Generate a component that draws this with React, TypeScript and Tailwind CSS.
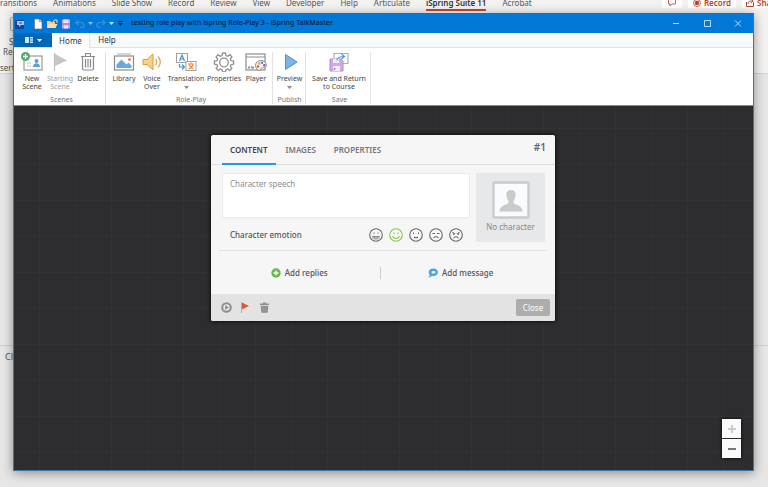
import { useState, type ReactNode } from 'react';
import clsx from 'clsx';

const hostTabs = ['Transitions', 'Animations', 'Slide Show', 'Record', 'Review', 'View', 'Developer', 'Help', 'Articulate', 'iSpring Suite 11', 'Acrobat'];

/* Title bar icons */

const AppIcon = () => (
  <svg className="h-3 w-3" viewBox="0 0 12 12">
    <rect x="1" y="2" width="9" height="9" fill="#1d3f94" />
    <path d="M3 3h7v4H7L5 9V7H3z" fill="#a9c9f0" />
    <path d="M5 5h3" stroke="#1d3f94" />
  </svg>
);

const NewFileIcon = () => (
  <svg className="h-3 w-3" viewBox="0 0 12 12">
    <path d="M2.5 1h5L10 3.5V11H2.500z" fill="#fafafa" stroke="#667" strokeWidth=".6" />
    <path d="M7.500 1v2.500H10" fill="#ccd" stroke="#667" strokeWidth=".6" />
  </svg>
);

const OpenIcon = () => (
  <svg className="h-3 w-3" viewBox="0 0 12 12">
    <path d="M1 10V3h3l1 1h4v2" fill="#f4cf85" />
    <path d="M7 4l1.500-2H11v3" fill="none" stroke="#d5e7fa" />
    <path d="M1 10l2-4h8.500L9.500 10z" fill="#ffe0a0" />
  </svg>
);

const SaveIcon = () => (
  <svg className="h-3 w-3" viewBox="0 0 12 12">
    <path d="M2 1.500h8v9H2z" fill="#c9a0e4" />
    <path d="M3.500 1.500h5V5h-5zM4 7.500h4v3H4z" fill="#efe0fa" />
    <path d="M2 6h8" stroke="#a873cf" />
  </svg>
);

const UndoIcon = ({ flip = false }: { flip?: boolean }) => (
  <svg className={clsx('h-3 w-3', flip && '-scale-x-100')} viewBox="0 0 12 12" fill="none" stroke="#3f8fda" strokeWidth="1.200">
    <path d="M4.500 2L2 4.500 4.500 7M2 4.500h5c4 0 4 5 0 5H6" />
  </svg>
);

const Caret = ({ className }: { className?: string }) => (
  <svg className={clsx('h-[3px] w-[5px]', className)} viewBox="0 0 5 3">
    <path d="M0 0h5L2.500 3z" fill="currentColor" />
  </svg>
);

/* Ribbon icons, all drawn on a 22x20 field */

const RibbonSvg = ({ children }: { children: ReactNode }) => (
  <svg className="h-5 w-[22px] shrink-0" viewBox="0 0 22 20" fill="none">{children}</svg>
);

const NewSceneIcon = () => (
  <RibbonSvg>
    <rect x="3" y="4" width="18" height="14" fill="#fff" stroke="#9a9a9a" strokeWidth="1.200" />
    <path d="M6 11h4M6 14h4" stroke="#c3c3c3" strokeWidth="1.200" />
    <circle cx="15.500" cy="9" r="2" fill="#5b9fdf" />
    <path d="M12 15c0-5 7-5 7 0z" fill="#5b9fdf" />
    <circle cx="4.500" cy="4.500" r="4.500" fill="#4fae6b" />
    <path d="M4.500 2v5M2 4.500h5" stroke="#fff" strokeWidth="1.300" />
  </RibbonSvg>
);

const StartIcon = () => (
  <RibbonSvg>
    <path d="M5.500 1v18" stroke="#c2c2c2" strokeWidth="1.200" />
    <path d="M6 2l12 6.500L6 14z" fill="#c6c6c6" />
  </RibbonSvg>
);

const DeleteIcon = () => (
  <RibbonSvg>
    <path d="M5.500 5v11.500c0 1 .5 1.500 1.500 1.500h8c1 0 1.500-.5 1.500-1.500V5M4 4.500h14M8.500 4V1.500h5V4" stroke="#8a8a8a" strokeWidth="1.200" />
    <path d="M8.500 7v8.500M11 7v8.500M13.500 7v8.500" stroke="#8a8a8a" strokeWidth="1.200" />
  </RibbonSvg>
);

const LibraryIcon = () => (
  <RibbonSvg>
    <path d="M4 2h14" stroke="#aaa" />
    <rect x="1.500" y="4" width="19" height="14" fill="#fff" stroke="#8a8a8a" strokeWidth="1.200" />
    <path d="M3.500 16v-3.500l5-5 5 5 2-2 3 3V16z" fill="#68aade" />
    <circle cx="16.500" cy="7.500" r="1.600" fill="#f18a45" />
  </RibbonSvg>
);

const VoiceIcon = () => (
  <RibbonSvg>
    <path d="M2 7.500h4l6-5.500v16l-6-5.500H2z" fill="#fbd084" stroke="#d89c42" />
    <path d="M14.500 7c1.600 1.500 1.600 4.500 0 6M17 4.500c3 3 3 8 0 11" stroke="#dda750" strokeWidth="1.300" />
  </RibbonSvg>
);

const TranslationIcon = () => (
  <RibbonSvg>
    <rect x="1.500" y="1.500" width="11" height="9" fill="#fff" stroke="#a0a0a0" />
    <path d="M4.500 9L7 3l2.500 6M5.500 7h3" stroke="#3d94db" strokeWidth="1.200" />
    <rect x="11" y="9.500" width="10" height="9" fill="#fff" stroke="#a0a0a0" />
    <path d="M13 12h6M16 10.500V12M18 12.500c-.5 2-2 3.500-4.500 4.500M14 12.500c1 2 2.500 3.500 4.500 4.500" stroke="#ef8a40" strokeWidth="1.100" />
    <path d="M4.500 12v3H9M7 12.500L9.500 15 7 17.500" stroke="#4595d6" strokeWidth="1.200" />
  </RibbonSvg>
);

const GearIcon = () => (
  <RibbonSvg>
    <path
      d="M9.500 1h3l.5 2.500 1.700.7 2.100-1.500 2.100 2.100-1.500 2.100.7 1.700 2.500.5v3l-2.500.5-.7 1.700 1.500 2.100-2.100 2.100-2.100-1.500-1.700.7-.5 2.300h-3L9 17.700 7.300 17l-2.100 1.500-2.100-2.100 1.500-2.100-.7-1.700-2.500-.5v-3l2.500-.5.7-1.700-1.500-2.100 2.100-2.100 2.100 1.500L9 3.500z"
      stroke="#919191"
      strokeWidth="1.300"
    />
    <circle cx="11" cy="10.500" r="4.300" stroke="#919191" strokeWidth="1.300" />
  </RibbonSvg>
);

const PlayerIcon = () => (
  <RibbonSvg>
    <rect x="1" y="2" width="19" height="16" fill="#fff" stroke="#8d8d8d" strokeWidth="1.200" />
    <path d="M1 5h19" stroke="#8d8d8d" />
    <path d="M3 15.500h2M6 15.500h3" stroke="#8d8d8d" strokeWidth="2" />
    <path d="M16 8.500c-3.500 0-5.500 2.200-5.500 5s2 5 4.500 5c1.500 0 .5-2 1.500-2.500s5 .5 5-2.500c0-3-2.500-5-5.500-5z" fill="#f6f0ee" stroke="#8d8d8d" />
    <circle cx="13" cy="14.500" r="1.200" fill="#e4513c" />
    <circle cx="14" cy="11.500" r="1.200" fill="#f2a03d" />
    <circle cx="17" cy="10.800" r="1.200" fill="#4a92e0" />
    <circle cx="19.300" cy="13.300" r="1.200" fill="#8a4cc2" />
  </RibbonSvg>
);

const PreviewIcon = () => (
  <RibbonSvg>
    <path d="M6.500 2.500L18 10 6.500 17.500z" fill="#7cb3e8" stroke="#4b8fcf" />
  </RibbonSvg>
);

const SaveReturnIcon = () => (
  <RibbonSvg>
    <path d="M6 6V1.500h14v10h-5" stroke="#b0b0b0" strokeWidth="1.200" />
    <path d="M2 7h11l2 2v10H2z" fill="#ceabe3" stroke="#b48bd0" />
    <path d="M5 7h6v4H5zM5 14h7v5H5z" fill="#f4eafa" />
    <path d="M6.500 16v2" stroke="#a67ac5" strokeWidth="1.500" />
    <path d="M9 8.500c0-3 2-4 7-4M13.500 2l3 2.500-3 2.500" stroke="#4b9be0" strokeWidth="1.200" />
  </RibbonSvg>
);

type Command = { label: string[]; icon: ReactNode; width: string; muted?: boolean; menu?: boolean };

const groups: { name: string; className: string; commands: Command[] }[] = [
  {
    name: 'Scenes',
    className: 'w-[92px] pl-1',
    commands: [
      { label: ['New', 'Scene'], icon: <NewSceneIcon />, width: 'w-7' },
      { label: ['Starting', 'Scene'], icon: <StartIcon />, width: 'w-7', muted: true },
      { label: ['Delete'], icon: <DeleteIcon />, width: 'w-7' },
    ],
  },
  {
    name: 'Role-Play',
    className: 'w-[167px] pl-1',
    commands: [
      { label: ['Library'], icon: <LibraryIcon />, width: 'w-7' },
      { label: ['Voice', 'Over'], icon: <VoiceIcon />, width: 'w-7' },
      { label: ['Translation'], icon: <TranslationIcon />, width: 'w-10', menu: true },
      { label: ['Properties'], icon: <GearIcon />, width: 'w-9' },
      { label: ['Player'], icon: <PlayerIcon />, width: 'w-7' },
    ],
  },
  { name: 'Publish', className: 'w-[33px] pl-px', commands: [{ label: ['Preview'], icon: <PreviewIcon />, width: 'w-8', menu: true }] },
  { name: 'Save', className: 'w-[65px] pl-[3px]', commands: [{ label: ['Save and Return', 'to Course'], icon: <SaveReturnIcon />, width: 'w-15' }] },
];

const emotions: { name: string; face: ReactNode }[] = [
  { name: 'Laughing', face: <path d="M5 4.500V6M9 4.500V6M3.500 8.500h7c-.5 3.200-6.500 3.200-7 0zM5.800 8.500V10.500M8.200 8.500V10.500" strokeWidth=".8" /> },
  { name: 'Happy', face: <path d="M5 4.500V6M9 4.500V6M3.500 8.300c1.500 3 5.500 3 7 0" /> },
  { name: 'Neutral', face: <path d="M4.500 4.500V6M9.500 4.500V6M5 9c1 1 3 1 4 0" /> },
  { name: 'Sad', face: <path d="M3.500 5.500h2.500M8 5.500h2.500M4.500 10c1.500-1.700 3.500-1.700 5 0" /> },
  { name: 'Angry', face: <path d="M3.500 4.500L6 6M10.500 4.500L8 6M4.500 6v.7M9.500 6v.7M4.500 10.200c1.500-2 3.500-2 5 0" /> },
];

const HostApp = () => (
  <div className="col-start-1 row-start-1 flex h-screen min-w-0 flex-col overflow-hidden bg-[#e6e6e6] text-[8px] text-[#555]">
    <div className="flex h-[74px] shrink-0 flex-col border-b border-[#d2d2d2] bg-[#f3f2f1]">
      <div className="-mt-[3px] -ml-1 flex h-[14px] justify-between">
        <nav className="flex gap-4 whitespace-nowrap leading-[11px]">
          {hostTabs.map((tab) => (
            <a
              key={tab}
              href="#"
              className={clsx('block', tab === 'iSpring Suite 11' && 'border-b-2 border-[#c2472c] font-semibold text-[#333]')}
            >
              {tab}
            </a>
          ))}
        </nav>
        <div className="flex h-[11px] shrink-0 gap-[6px] overflow-hidden leading-[11px] font-semibold text-[#b8432f]">
          <button aria-label="Comments" className="flex w-5 justify-center bg-white pt-[3px]">
            <svg className="h-2 w-2" viewBox="0 0 8 8" fill="none" stroke="currentColor" strokeWidth=".8">
              <path d="M.5 0v4H2v2l2-2h3.500V0" />
            </svg>
          </button>
          <button className="flex w-12 items-center justify-center gap-[3px] bg-white">
            <svg className="h-2 w-2" viewBox="0 0 8 8">
              <circle cx="4" cy="4" r="3.500" fill="none" stroke="currentColor" strokeWidth=".8" />
              <circle cx="4" cy="4" r="2.200" fill="currentColor" />
            </svg>
            Record
          </button>
          <button className="flex w-[26px] items-center gap-[3px] overflow-hidden bg-white pl-1">
            <svg className="h-2 w-2 shrink-0" viewBox="0 0 8 8" fill="none" stroke="currentColor">
              <path d="M.5 3v4.500h7V3M2 5c0-3 2-3 4-3M5 0l2 2-2 2" />
            </svg>
            Share
          </button>
        </div>
      </div>
      <div className="flex flex-col pt-[6px] leading-[10px]">
        <svg className="mb-[5px] ml-[10px] h-[15px] w-[15px]" viewBox="0 0 15 15" fill="none" stroke="#aaa">
          <rect x=".5" y=".5" width="14" height="13" rx="1" />
        </svg>
        <span className="pl-[9px]">Slide</span>
        <span className="pl-[3px]">Record</span>
        <span className="pt-[6px]">sert</span>
      </div>
    </div>
    <div className="flex-1" />
    <div className="h-[142px] shrink-0 border-t border-[#cfcfcf] pt-[5px] pl-[5px] text-[9px] leading-3">Click to add notes</div>
  </div>
);

const TitleBar = () => (
  <header className="flex h-[19px] shrink-0 items-center bg-[#0078d7] text-[#041d38]">
    <div className="flex items-center">
      <AppIcon />
      <button aria-label="New" className="ml-[6px]"><NewFileIcon /></button>
      <button aria-label="Open" className="ml-[2px]"><OpenIcon /></button>
      <button aria-label="Save" className="ml-[2px]"><SaveIcon /></button>
      <button aria-label="Undo" className="ml-[2px]"><UndoIcon /></button>
      <button aria-label="Undo history" className="px-[2px] text-[#8fbfe9]"><Caret /></button>
      <button aria-label="Redo"><UndoIcon flip /></button>
      <button aria-label="Redo history" className="px-[2px] text-[#c4e0f8]"><Caret /></button>
      <button aria-label="Customize toolbar" className="flex flex-col gap-px px-[2px]">
        <span className="h-px w-[5px] bg-current" />
        <Caret />
      </button>
    </div>
    <h1 className="ml-[6px] flex-1 truncate text-[7px] font-medium">testing role play with ispring Role-Play 3 - iSpring TalkMaster</h1>
    <div className="flex text-[#b9dcf8]">
      {['M1 3.500h6', 'M1.500 .5h6v6h-6z', 'M1 .5l6 6M7 .5l-6 6'].map((d, i) => (
        <button key={d} aria-label={['Minimize', 'Maximize', 'Close window'][i]} className="flex w-[31px] justify-center">
          <svg className="h-2 w-2" viewBox="0 0 8 8" fill="none" stroke="currentColor"><path d={d} /></svg>
        </button>
      ))}
    </div>
  </header>
);

const Ribbon = () => (
  <div className="shrink-0">
    <div className="flex h-[15px] border-b border-[#dfe3e3] bg-[#f7f9fa] text-[8px] leading-[14px] text-[#333]">
      <button aria-label="File" className="flex w-[38px] items-center justify-center gap-1 bg-[#0067b8] text-white">
        <svg className="h-2 w-2" viewBox="0 0 8 8">
          <path d="M0 1h4v6H0zM5 1h3v1.500H5zM5 3.300h3v1.400H5zM5 5.500h3V7H5z" fill="#d5e9f9" />
        </svg>
        <Caret />
      </button>
      <button className="-mb-px h-[15px] w-[38px] border-r border-[#dfe3e3] bg-white">Home</button>
      <button className="w-[34px]">Help</button>
    </div>
    <div className="flex h-[58px] border-b border-[#8a8a8a] bg-white pt-1 pb-px text-[7px] leading-2 text-[#444]">
      {groups.map((group) => (
        <section key={group.name} className={clsx('flex shrink-0 flex-col justify-between border-r border-[#e2e2e2]', group.className)}>
          <div className="flex items-start">
            {group.commands.map((command) => (
              <button
                key={command.label[0]}
                className={clsx('flex flex-col items-center whitespace-nowrap', command.width, command.muted && 'text-[#a0a0a0]')}
              >
                {command.icon}
                <span className="mt-[3px] block">
                  {command.label.map((line) => <span key={line} className="block">{line}</span>)}
                </span>
                {command.menu && <Caret className="mt-[3px] text-[#888]" />}
              </button>
            ))}
          </div>
          <h2 className="text-center text-[#74747e]">{group.name}</h2>
        </section>
      ))}
    </div>
  </div>
);

const SceneCard = () => {
  const [tab, setTab] = useState('CONTENT');
  const [emotion, setEmotion] = useState('Happy');

  return (
    <section className="w-[344px] overflow-hidden rounded-xs bg-[#f6f6f6] text-[#555] shadow-[0_0_4px_#000]">
      <div className="flex h-[30px] justify-between border-b border-[#e0e0e0] pr-[9px] pl-[11px]">
        <div className="flex gap-[2px] text-[8px] font-semibold">
          {['CONTENT', 'IMAGES', 'PROPERTIES'].map((name) => (
            <button
              key={name}
              onClick={() => setTab(name)}
              className={clsx(
                'h-[30px] border-b-2 px-2 pt-[2px]',
                tab === name ? 'border-[#189be0] text-[#444]' : 'border-transparent text-[#777]'
              )}
            >
              {name}
            </button>
          ))}
        </div>
        <span className="pt-1 text-[10px] leading-4 font-semibold text-[#666]">#1</span>
      </div>

      <div className="mx-2 flex gap-[6px] border-b border-[#e3e3e3] pt-2 pr-[2px] pb-2 pl-[3px]">
        <div className="flex-1">
          <textarea
            aria-label="Character speech"
            placeholder="Character speech"
            className="block h-[45px] w-full resize-none border border-[#ebebeb] bg-white px-[7px] py-1 text-[8px] leading-3 outline-none placeholder:text-[#8e8e8e]"
          />
          <div className="flex items-center justify-between pt-[10px] pr-[7px] pl-2">
            <span className="text-[8px] font-medium">Character emotion</span>
            <div className="flex gap-[6px]">
              {emotions.map(({ name, face }) => (
                <button key={name} aria-label={name} onClick={() => setEmotion(name)} className={emotion === name ? 'text-[#86c34e]' : 'text-[#666]'}>
                  <svg className="h-[14px] w-[14px]" viewBox="0 0 14 14" fill="none" stroke="currentColor" strokeWidth="1.100">
                    <circle cx="7" cy="7" r="6.300" />
                    {face}
                  </svg>
                </button>
              ))}
            </div>
          </div>
        </div>
        <button className="flex h-[69px] w-[69px] flex-col items-center bg-[#e7e8e9] pt-2 text-[8px] leading-3 text-[#888]">
          <svg className="h-[38px] w-[38px]" viewBox="0 0 38 38">
            <rect x="1.500" y="1.500" width="35" height="35" rx="1" fill="#fafbfe" stroke="#c9cac9" strokeWidth="2.400" />
            <path d="M19 9c-3.500 0-5 2.300-4.600 5.500.3 2.500 1.200 4 2 5v2.500c-1 2-8.900 2-9 8.500h23.200c-.1-6.500-8-6.500-9-8.500v-2.500c.8-1 1.700-2.500 2-5C24 11.300 22.500 9 19 9z" fill="#c9cac9" />
          </svg>
          <span className="mt-[2px]">No character</span>
        </button>
      </div>

      <div className="flex h-[43px] items-center pr-[14px] pl-2 text-[8px] font-medium">
        <button className="flex flex-1 items-center justify-center gap-1">
          <svg className="h-[10px] w-[10px]" viewBox="0 0 10 10">
            <circle cx="5" cy="5" r="4.700" fill="#66b94d" />
            <path d="M5 2.500v5M2.500 5h5" stroke="#fff" strokeWidth="1.400" />
          </svg>
          Add replies
        </button>
        <span className="h-3 w-px bg-[#ccc]" />
        <button className="flex flex-1 items-center justify-center gap-1">
          <svg className="h-[10px] w-[10px]" viewBox="0 0 10 10">
            <path d="M5.300.5C2.500.5.700 2.200.700 4.300c0 1.200.5 2.100 1 2.700-.1 1-.6 1.700-1.500 2.300 1.500.1 2.600-.4 3.400-1.200 3.300.6 6.300-1.200 6.300-3.800C9.900 2.200 8 .5 5.300.5z" fill="#4ca3e0" />
            <path d="M3.700 3.300h3.600v2h-1.700L4.700 6.300v-1h-1z" fill="#fff" />
          </svg>
          Add message
        </button>
      </div>

      <footer className="flex h-[27px] items-center gap-[8px] bg-[#e3e3e3] pr-[5px] pl-[10px]">
        <button aria-label="Play">
          <svg className="h-[11px] w-[11px]" viewBox="0 0 11 11">
            <circle cx="5.500" cy="5.500" r="4.300" fill="#e3e3e3" stroke="#8e8e8e" strokeWidth="2" />
            <path d="M4.200 3.200l3.700 2.300-3.700 2.300z" fill="#8e8e8e" />
          </svg>
        </button>
        <button aria-label="Set as starting scene">
          <svg className="h-[11px] w-[11px]" viewBox="0 0 11 11">
            <path d="M1.500 0v11" stroke="#aaa" />
            <path d="M2 .5l7 3.500-7 3.500z" fill="#df5540" />
          </svg>
        </button>
        <button aria-label="Delete scene">
          <svg className="h-[11px] w-[11px]" viewBox="0 0 11 11">
            <path d="M1 1.500h3V.500h3v1h3V3H1zM1.700 3.700h7.600L8.800 10q-.1.700-.8.700H3q-.7 0-.8-.7z" fill="#909090" />
            <path d="M4.200 5v4.500M6.800 5v4.500" stroke="#a9a9a9" strokeWidth=".6" />
          </svg>
        </button>
        <button className="ml-auto h-[17px] w-[34px] rounded-xs bg-[#adadad] text-[8px] text-white">Close</button>
      </footer>
    </section>
  );
};

const App = () => (
  <div className="grid grid-cols-[minmax(0,1fr)] overflow-hidden font-['Noto_Sans','Open_Sans',sans-serif]">
    <HostApp />
    <div className="z-10 col-start-1 row-start-1 mt-[13px] mr-[14px] mb-4 ml-[13px] flex flex-col border border-[#3d75a8] border-t-[#0078d7] shadow-[0_2px_10px_rgba(0,0,0,0.4)]">
      <TitleBar />
      <Ribbon />
      <main className="relative flex flex-1 items-start justify-center bg-[#2d2d2f] bg-[linear-gradient(#323234_1px,transparent_1px),linear-gradient(90deg,#323234_1px,transparent_1px)] bg-[size:36px_36px] bg-[position:25px_22px] pt-[29px] pr-px">
        <SceneCard />
        <div className="absolute right-3 bottom-3 flex flex-col gap-px shadow-[0_0_3px_#000]">
          <button aria-label="Zoom in" className="flex h-[19px] w-[19px] items-center justify-center bg-[#fafafa] text-[#ccc]">
            <svg className="h-2 w-2" viewBox="0 0 8 8" stroke="currentColor" strokeWidth="2"><path d="M4 0v8M0 4h8" /></svg>
          </button>
          <button aria-label="Zoom out" className="flex h-[19px] w-[19px] items-center justify-center bg-[#fafafa] text-[#777]">
            <svg className="h-2 w-2" viewBox="0 0 8 8" stroke="currentColor" strokeWidth="2"><path d="M0 4h8" /></svg>
          </button>
        </div>
      </main>
    </div>
  </div>
);

export default App;
